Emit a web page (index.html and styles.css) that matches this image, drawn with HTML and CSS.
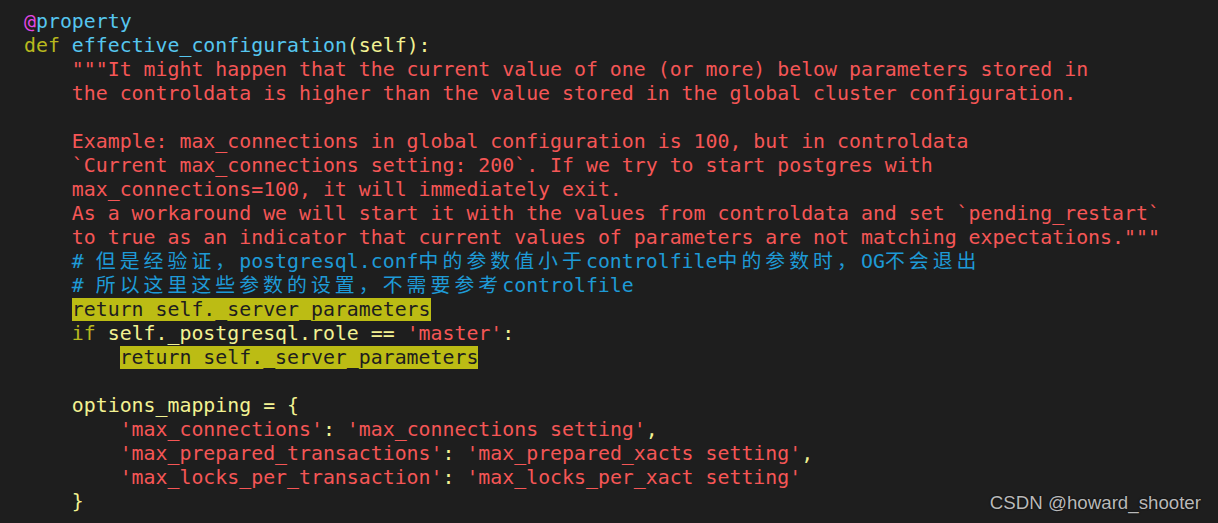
FILE: index.html
```html
<!DOCTYPE html>
<html lang="zh">
<head>
<meta charset="utf-8">
<title>effective_configuration</title>
<link rel="stylesheet" href="styles.css">
</head>
<body>
<main class="editor">
<pre class="code"><span class="dec">@</span><span class="fn">property</span>
<span class="kw">def</span> <span class="fn">effective_configuration</span><span class="pl">(self):</span>
    <span class="str">"""It might happen that the current value of one (or more) below parameters stored in
    the controldata is higher than the value stored in the global cluster configuration.

    Example: max_connections in global configuration is 100, but in controldata
    `Current max_connections setting: 200`. If we try to start postgres with
    max_connections=100, it will immediately exit.
    As a workaround we will start it with the values from controldata and set `pending_restart`
    to true as an indicator that current values of parameters are not matching expectations."""</span>
    <span class="cm"># <span class="cjk">但是经验证，</span>postgresql.conf<span class="cjk">中的参数值小于</span>controlfile<span class="cjk">中的参数时，</span>OG<span class="cjk">不会退出</span></span>
    <span class="cm"># <span class="cjk">所以这里这些参数的设置，不需要参考</span>controlfile</span>
    <span class="hl">return self._server_parameters</span>
    <span class="kw">if</span> <span class="pl">self._postgresql.role == </span><span class="str">'master'</span><span class="pl">:</span>
        <span class="hl">return self._server_parameters</span>

    <span class="pl">options_mapping = {</span>
        <span class="str">'max_connections'</span><span class="pl">: </span><span class="str">'max_connections setting'</span><span class="pl">,</span>
        <span class="str">'max_prepared_transactions'</span><span class="pl">: </span><span class="str">'max_prepared_xacts setting'</span><span class="pl">,</span>
        <span class="str">'max_locks_per_transaction'</span><span class="pl">: </span><span class="str">'max_locks_per_xact setting'</span>
    <span class="pl">}</span></pre>
<div class="watermark">CSDN @howard_shooter</div>
</main>
</body>
</html>
```

FILE: styles.css
```css
html, body {
  margin: 0;
  padding: 0;
  background: #1e1e1e;
}

.editor {
  position: relative;
  width: 1218px;
  height: 523px;
  box-sizing: border-box;
  padding: 10px 0 0 24px;
  overflow: hidden;
}

.code {
  margin: 0;
  font-family: "DejaVu Sans Mono", "Noto Sans CJK SC", monospace;
  font-size: 19.87px;
  line-height: 24px;
  color: #f2f292;
}

.dec { color: #e447e4; }
.fn { color: #56c6ef; }
.kw { color: #b8b81e; }
.pl { color: #f2f292; }
.str { color: #f55656; }
.cm { color: #1e9ad6; }

.cjk {
  font-family: "Noto Sans CJK SC", sans-serif;
  letter-spacing: 4.05px;
  line-height: 0;
}

.hl {
  background: #bcbc14;
  color: #1e1e1e;
}

.watermark {
  position: absolute;
  right: 17px;
  bottom: 9px;
  font-family: "Liberation Sans", Arial, sans-serif;
  font-size: 18.7px;
  color: #b9b9b9;
  text-shadow: 0 0 2px #000;
}
```
